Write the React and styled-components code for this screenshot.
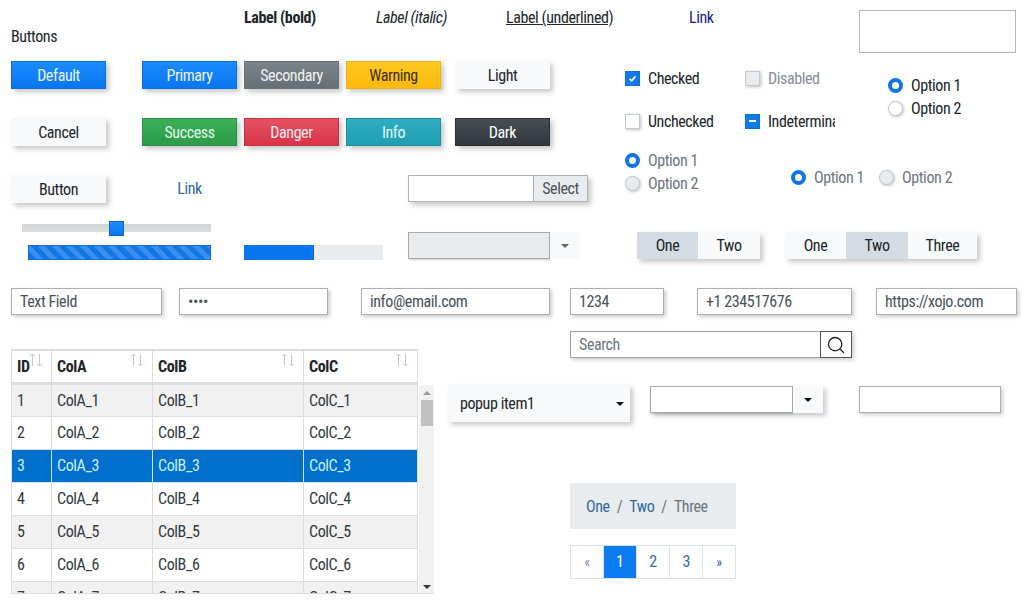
import React from 'react';
import styled, { createGlobalStyle, css } from 'styled-components';
import { Search } from 'lucide-react';

const GlobalStyle = createGlobalStyle`
  html, body {
    margin: 0;
    padding: 0;
    background: #fff;
  }
  body {
    font-family: Roboto, 'Liberation Sans', sans-serif;
    font-stretch: 75%;
    font-size: 16px;
    letter-spacing: -0.4px;
    color: #212529;
  }
  * {
    box-sizing: border-box;
  }
`;

const softShadow = '3px 3px 5px rgba(0, 0, 0, 0.22)';

const Page = styled.div`
  width: 1024px;
  height: 614px;
  overflow: hidden;
`;

const LabelRow = styled.div`
  display: flex;
  height: 53px;
  padding: 10px 8px 0 11px;
`;

const LabelText = styled.span`
  flex: none;
  width: ${p => p.$w}px;
  margin-left: ${p => p.$ml || 0}px;
  margin-top: ${p => p.$mt || 0}px;
  line-height: 16px;
  white-space: nowrap;
  font-weight: ${p => (p.$bold ? 700 : 400)};
  font-style: ${p => (p.$italic ? 'italic' : 'normal')};
  text-decoration: ${p => (p.$underline ? 'underline' : 'none')};
  color: ${p => p.$color || '#212529'};
`;

const TextArea = styled.div`
  width: 157px;
  height: 43px;
  margin-left: auto;
  border: 1px solid #b4b4b4;
  background: #fff;
`;

const TopArea = styled.div`
  display: flex;
  margin-top: 8px;
  padding-left: 11px;
`;

const ButtonColumn = styled.div`
  flex: none;
  width: 614px;
`;

const ButtonGrid = styled.div`
  display: grid;
  grid-template-columns: 131px 102px 102px 109px 95px;
  grid-auto-rows: 28px;
  row-gap: 29px;
`;

const variants = {
  primary: css`background: linear-gradient(#1b8bff, #0a76ee); border-color: #0f6fd8; color: #eaf4ff;`,
  secondary: css`background: linear-gradient(#7b838b, #666e76); border-color: #6a7178; color: #f1f2f3;`,
  success: css`background: linear-gradient(#3bb058, #2b9c49); border-color: #2a8f44; color: #e4f5e8;`,
  danger: css`background: linear-gradient(#e55265, #d93448); border-color: #c92f42; color: #fde9eb;`,
  warning: css`background: linear-gradient(#ffc824, #fdb90c); border-color: #f0b20e; color: #3b3010;`,
  info: css`background: linear-gradient(#30adc1, #1f9fb3); border-color: #1b8fa2; color: #e2f6f9;`,
  dark: css`background: linear-gradient(#484e54, #32373c); border-color: #2c3034; color: #fff;`,
  light: css`background: #f8f9fa; border-color: #f8f9fa; color: #212529;`,
};

const Btn = styled.button`
  width: 95px;
  height: 28px;
  padding: 0;
  border-width: 1px;
  border-style: solid;
  border-radius: 0;
  font: inherit;
  font-stretch: 75%;
  letter-spacing: inherit;
  box-shadow: ${softShadow};
  ${p => variants[p.$kind || 'light']}
`;

const ButtonRow = styled.div`
  display: flex;
  align-items: flex-start;
  height: 28px;
  margin-top: 29px;
`;

const TextLink = styled.span`
  flex: none;
  width: 95px;
  margin-left: 36px;
  line-height: 28px;
  text-align: center;
  color: #33689f;
`;

const SelectField = styled.div`
  flex: none;
  display: flex;
  width: 180px;
  height: 27px;
  margin-left: 171px;
  border: 1px solid #b0b0b0;
  box-shadow: ${softShadow};
`;

const SelectInput = styled.div`
  flex: 1;
  background: #fff;
`;

const SelectAddon = styled.div`
  width: 54px;
  border-left: 1px solid #b0b0b0;
  background: #e9ecef;
  line-height: 25px;
  text-align: center;
  color: #495057;
`;

const OptionsArea = styled.div`
  flex: none;
  width: 399px;
  padding-top: 9px;
`;

const OptionsTop = styled.div`
  display: flex;
`;

const CheckGrid = styled.div`
  flex: none;
  display: grid;
  grid-template-columns: 120px 90px;
  grid-auto-rows: 15px;
  row-gap: 28px;
  width: 263px;
`;

const CheckItem = styled.div`
  display: flex;
  align-items: center;
  gap: 8px;
  overflow: hidden;
  height: 24px;
  margin: -4px 0;
  white-space: nowrap;
  color: ${p => (p.$disabled ? '#868e96' : '#212529')};
`;

const Box = styled.span`
  flex: none;
  display: inline-flex;
  align-items: center;
  justify-content: center;
  width: 15px;
  height: 15px;
  border: 1px solid #c4c8cc;
  background: #fff;
  box-shadow: 1px 1px 3px rgba(0, 0, 0, 0.25);
  ${p => p.$on && css`background: #0f7ae8; border-color: #0f6fd8; box-shadow: none;`}
  ${p => p.$disabled && css`background: #e9ecef;`}
`;

const Dash = styled.span`
  width: 7px;
  height: 2px;
  background: #fff;
`;

const RadioStack = styled.div`
  flex: none;
  display: flex;
  flex-direction: column;
  gap: 8px;
  width: ${p => p.$w || 'auto'};
  margin-top: ${p => p.$mt || 0}px;
  color: ${p => (p.$muted ? '#6c757d' : '#212529')};
`;

const RadioItem = styled.div`
  display: flex;
  align-items: center;
  gap: 8px;
  height: 15px;
  white-space: nowrap;
`;

const RadioDot = styled.span`
  flex: none;
  width: 15px;
  height: 15px;
  border-radius: 50%;
  border: 1px solid #c0c4c8;
  background: ${p => (p.$off ? '#e9ecef' : '#fff')};
  box-shadow: 1px 1px 3px rgba(0, 0, 0, 0.25);
  ${p => p.$on && css`border: 4.5px solid #0f74e6; background: #fff; box-shadow: none;`}
`;

const RadioBottom = styled.div`
  display: flex;
  margin-top: 25px;
`;

const RadioInline = styled.div`
  display: flex;
  gap: 15px;
  margin-top: 17px;
  color: #6c757d;
`;

const ControlRow = styled.div`
  display: flex;
  align-items: flex-start;
  margin-top: 17px;
  padding-left: 22px;
`;

const SliderColumn = styled.div`
  flex: none;
  width: 189px;
`;

const Slider = styled.div`
  display: flex;
  align-items: center;
  height: 16px;
  background: linear-gradient(#d2d4d6, #dcdedf) center / 100% 8px no-repeat;
  padding-left: 87px;
`;

const SliderThumb = styled.span`
  width: 15px;
  height: 15px;
  border: 1px solid #0d66c8;
  background: linear-gradient(#1b8bff, #0a76ee);
`;

const Striped = styled.div`
  height: 15px;
  margin: 9px 0 0 6px;
  border: 1px solid #0f6fd8;
  background: repeating-linear-gradient(
    45deg,
    #1176e6 0 5px,
    #3a8ef0 5px 10px
  );
`;

const Progress = styled.div`
  flex: none;
  width: 139px;
  height: 15px;
  margin: 25px 0 0 33px;
  background: #e9ecef;
`;

const ProgressFill = styled.div`
  height: 100%;
  background: #0a76ee;
  border-right: 1px solid #0d66c8;
`;

const Combo = styled.div`
  flex: none;
  display: flex;
  width: ${p => p.$w}px;
  height: 27px;
  margin-left: ${p => p.$ml}px;
  margin-top: ${p => p.$mt || 0}px;
  box-shadow: ${p => (p.$flat ? 'none' : softShadow)};
`;

const ComboInput = styled.div`
  flex: 1;
  border: 1px solid #a8a8a8;
  background: ${p => (p.$disabled ? '#e9ecef' : '#fff')};
  box-shadow: 1px 1px 2px rgba(0, 0, 0, 0.2);
`;

const ComboArrow = styled.div`
  flex: none;
  display: flex;
  align-items: center;
  justify-content: center;
  width: 30px;
  background: #f8f9fa;
`;

const Caret = styled.span`
  width: 0;
  height: 0;
  border-left: 4px solid transparent;
  border-right: 4px solid transparent;
  border-top: 4px solid ${p => p.$color || '#111'};
  ${p => p.$up && css`
    border-top: 0;
    border-bottom: 4px solid ${p.$color || '#111'};
  `}
`;

const Segmented = styled.div`
  flex: none;
  display: flex;
  height: 27px;
  margin-left: ${p => p.$ml}px;
  margin-top: 12px;
  box-shadow: ${softShadow};
`;

const Segment = styled.div`
  width: ${p => p.$w}px;
  line-height: 27px;
  text-align: center;
  background: ${p => (p.$active ? '#d5dbe2' : '#f8f9fa')};
  color: #212529;
`;

const FieldRow = styled.div`
  display: flex;
  margin-top: 28px;
  padding-left: 11px;
`;

const Field = styled.div`
  flex: none;
  width: ${p => p.$w}px;
  height: 27px;
  margin-left: ${p => p.$ml || 0}px;
  margin-top: ${p => p.$mt || 0}px;
  padding-left: 8px;
  border: 1px solid #aeaeae;
  background: #fff;
  box-shadow: 2px 2px 4px rgba(0, 0, 0, 0.2);
  line-height: 25px;
  color: ${p => p.$color || '#495057'};
  white-space: nowrap;
`;

const BottomArea = styled.div`
  display: flex;
  align-items: flex-start;
  margin-top: 16px;
  padding-left: 11px;
`;

const TableWrap = styled.div`
  flex: none;
  display: flex;
  width: 423px;
  height: 245px;
  margin-top: 18px;
  overflow: hidden;
  border-bottom: 1px solid #dcdcdc;
`;

const Grid = styled.table`
  flex: none;
  align-self: flex-start;
  width: 406px;
  border-collapse: collapse;
  table-layout: fixed;
  border-top: 2px solid #dcdcdc;
  border-left: 1px solid #dcdcdc;
`;

const HeadCell = styled.th`
  position: relative;
  width: ${p => p.$w}px;
  height: 33px;
  padding: 0 5px;
  border: 1px solid #dcdcdc;
  border-bottom: 3px solid #dcdcdc;
  border-top: 0;
  font-weight: 700;
  text-align: left;
  color: #212529;
`;

const SortIcon = styled.svg`
  position: absolute;
  top: 2px;
  right: 8px;
`;

const BodyRow = styled.tr`
  height: 33px;
  background: ${p => (p.$selected ? '#0070cc' : p.$odd ? '#f1f1f1' : '#fff')};
  color: ${p => (p.$selected ? '#c9efff' : '#343a40')};
`;

const BodyCell = styled.td`
  padding: 0 5px;
  border: 1px solid ${p => (p.$selected ? '#cfe4f6' : '#dcdcdc')};
`;

const ScrollBar = styled.div`
  flex: none;
  display: flex;
  flex-direction: column;
  align-items: center;
  width: 16px;
  height: 209px;
  margin: 36px 0 0 1px;
  padding: 6px 0 5px;
  background: #f1f1f1;
`;

const ScrollThumb = styled.div`
  width: 12px;
  height: 26px;
  margin-top: 5px;
  background: #c1c1c1;
`;

const ScrollFiller = styled.div`
  flex: 1;
`;

const RightColumn = styled.div`
  flex: none;
  width: 576px;
  margin-left: 14px;
`;

const SearchBox = styled.div`
  display: flex;
  width: 282px;
  height: 27px;
  margin-left: 122px;
  box-shadow: 2px 2px 4px rgba(0, 0, 0, 0.2);
`;

const SearchInput = styled.div`
  flex: 1;
  padding-left: 8px;
  border: 1px solid #a0a0a0;
  border-right: 0;
  background: #fff;
  line-height: 25px;
  color: #6c757d;
`;

const SearchButton = styled.div`
  display: flex;
  align-items: center;
  justify-content: center;
  width: 32px;
  border: 1px solid #555;
  background: #fff;
  color: #222;
`;

const PopupRow = styled.div`
  display: flex;
  align-items: flex-start;
  margin-top: 27px;
`;

const Popup = styled.div`
  flex: none;
  display: flex;
  align-items: center;
  justify-content: space-between;
  width: 182px;
  height: 37px;
  padding: 0 6px 0 12px;
  background: #f8f9fa;
  box-shadow: ${softShadow};
  color: #212529;
`;

const Breadcrumb = styled.div`
  display: flex;
  align-items: center;
  gap: 7px;
  width: 166px;
  height: 46px;
  margin: 61px 0 0 122px;
  padding-left: 16px;
  background: #e9ecef;
  color: #6c757d;
`;

const CrumbLink = styled.span`
  color: #33689f;
`;

const Pager = styled.div`
  display: flex;
  width: 166px;
  height: 34px;
  margin: 16px 0 0 122px;
  border: 1px solid #dee2e6;
`;

const PageCell = styled.div`
  width: ${p => p.$w}px;
  line-height: 32px;
  text-align: center;
  border-left: ${p => (p.$first ? 0 : '1px solid #dee2e6')};
  background: ${p => (p.$active ? '#0a7bf0' : '#fff')};
  color: ${p => (p.$active ? '#fff' : p.$muted ? '#868e96' : '#33689f')};
  font-size: ${p => (p.$small ? 14 : 16)}px;
`;

const SortArrows = () => (
  <SortIcon width="14" height="14" viewBox="0 0 14 14" fill="none" stroke="#c4c8cc" strokeWidth="1">
    <path d="M3.5 13V1M1 3.5 3.5 1 6 3.5" />
    <path d="M10.5 1v12M8 10.5l2.5 2.5 2.5-2.5" />
  </SortIcon>
);

const rows = [1, 2, 3, 4, 5, 6, 7];

const columns = [
  { name: 'ID', width: 40 },
  { name: 'ColA', width: 101 },
  { name: 'ColB', width: 151 },
  { name: 'ColC', width: 114 },
];

const App = () => (
  <Page>
    <GlobalStyle />

    <LabelRow>
      <LabelText $w={60} $mt={19}>Buttons</LabelText>
      <LabelText $w={132} $ml={173} $bold>Label (bold)</LabelText>
      <LabelText $w={130} $italic>Label (italic)</LabelText>
      <LabelText $w={183} $underline>Label (underlined)</LabelText>
      <LabelText $w={30} $color="#1c1c80">Link</LabelText>
      <TextArea />
    </LabelRow>

    <TopArea>
      <ButtonColumn>
        <ButtonGrid>
          <Btn $kind="primary">Default</Btn>
          <Btn $kind="primary">Primary</Btn>
          <Btn $kind="secondary">Secondary</Btn>
          <Btn $kind="warning">Warning</Btn>
          <Btn>Light</Btn>
          <Btn>Cancel</Btn>
          <Btn $kind="success">Success</Btn>
          <Btn $kind="danger">Danger</Btn>
          <Btn $kind="info">Info</Btn>
          <Btn $kind="dark">Dark</Btn>
        </ButtonGrid>
        <ButtonRow>
          <Btn>Button</Btn>
          <TextLink>Link</TextLink>
          <SelectField>
            <SelectInput />
            <SelectAddon>Select</SelectAddon>
          </SelectField>
        </ButtonRow>
      </ButtonColumn>

      <OptionsArea>
        <OptionsTop>
          <CheckGrid>
            <CheckItem>
              <Box $on>
                <svg width="9" height="9" viewBox="0 0 9 9" fill="none" stroke="#fff" strokeWidth="1.8">
                  <path d="M1.5 4.8 3.6 6.8 7.5 2.4" />
                </svg>
              </Box>
              Checked
            </CheckItem>
            <CheckItem $disabled>
              <Box $disabled />
              Disabled
            </CheckItem>
            <CheckItem>
              <Box />
              Unchecked
            </CheckItem>
            <CheckItem>
              <Box $on><Dash /></Box>
              Indeterminate
            </CheckItem>
          </CheckGrid>
          <RadioStack $mt={8}>
            <RadioItem><RadioDot $on />Option 1</RadioItem>
            <RadioItem><RadioDot />Option 2</RadioItem>
          </RadioStack>
        </OptionsTop>
        <RadioBottom>
          <RadioStack $w="166px" $muted>
            <RadioItem><RadioDot $on />Option 1</RadioItem>
            <RadioItem><RadioDot $off />Option 2</RadioItem>
          </RadioStack>
          <RadioInline>
            <RadioItem><RadioDot $on />Option 1</RadioItem>
            <RadioItem><RadioDot $off />Option 2</RadioItem>
          </RadioInline>
        </RadioBottom>
      </OptionsArea>
    </TopArea>

    <ControlRow>
      <SliderColumn>
        <Slider><SliderThumb /></Slider>
        <Striped />
      </SliderColumn>
      <Progress>
        <ProgressFill style={{ width: '50%' }} />
      </Progress>
      <Combo $w={172} $ml={25} $mt={12} $flat>
        <ComboInput $disabled />
        <ComboArrow><Caret $color="#666" /></ComboArrow>
      </Combo>
      <Segmented $ml={57}>
        <Segment $w={61} $active>One</Segment>
        <Segment $w={62}>Two</Segment>
      </Segmented>
      <Segmented $ml={25}>
        <Segment $w={61}>One</Segment>
        <Segment $w={62} $active>Two</Segment>
        <Segment $w={69}>Three</Segment>
      </Segmented>
    </ControlRow>

    <FieldRow>
      <Field $w={151}>Text Field</Field>
      <Field $w={149} $ml={17}>••••</Field>
      <Field $w={189} $ml={33}>info@email.com</Field>
      <Field $w={94} $ml={20}>1234</Field>
      <Field $w={155} $ml={33}>+1 234517676</Field>
      <Field $w={141} $ml={24}>https://xojo.com</Field>
    </FieldRow>

    <BottomArea>
      <TableWrap>
        <Grid>
          <thead>
            <tr>
              {columns.map(col => (
                <HeadCell key={col.name} $w={col.width}>
                  {col.name}
                  <SortArrows />
                </HeadCell>
              ))}
            </tr>
          </thead>
          <tbody>
            {rows.map(n => (
              <BodyRow key={n} $odd={n % 2 === 1} $selected={n === 3}>
                <BodyCell $selected={n === 3}>{n}</BodyCell>
                <BodyCell $selected={n === 3}>ColA_{n}</BodyCell>
                <BodyCell $selected={n === 3}>ColB_{n}</BodyCell>
                <BodyCell $selected={n === 3}>ColC_{n}</BodyCell>
              </BodyRow>
            ))}
          </tbody>
        </Grid>
        <ScrollBar>
          <Caret $up $color="#9a9a9a" />
          <ScrollThumb />
          <ScrollFiller />
          <Caret $color="#333" />
        </ScrollBar>
      </TableWrap>

      <RightColumn>
        <SearchBox>
          <SearchInput>Search</SearchInput>
          <SearchButton><Search size={20} strokeWidth={1.6} /></SearchButton>
        </SearchBox>

        <PopupRow>
          <Popup>
            popup item1
            <Caret />
          </Popup>
          <Combo $w={173} $ml={20} $mt={1}>
            <ComboInput />
            <ComboArrow><Caret /></ComboArrow>
          </Combo>
          <Field $w={142} $ml={36} $mt={1} />
        </PopupRow>

        <Breadcrumb>
          <CrumbLink>One</CrumbLink>
          /
          <CrumbLink>Two</CrumbLink>
          /
          <span>Three</span>
        </Breadcrumb>

        <Pager>
          <PageCell $w={32} $first $muted $small>«</PageCell>
          <PageCell $w={33} $active>1</PageCell>
          <PageCell $w={34}>2</PageCell>
          <PageCell $w={33}>3</PageCell>
          <PageCell $w={33} $small>»</PageCell>
        </Pager>
      </RightColumn>
    </BottomArea>
  </Page>
);

export default App;
